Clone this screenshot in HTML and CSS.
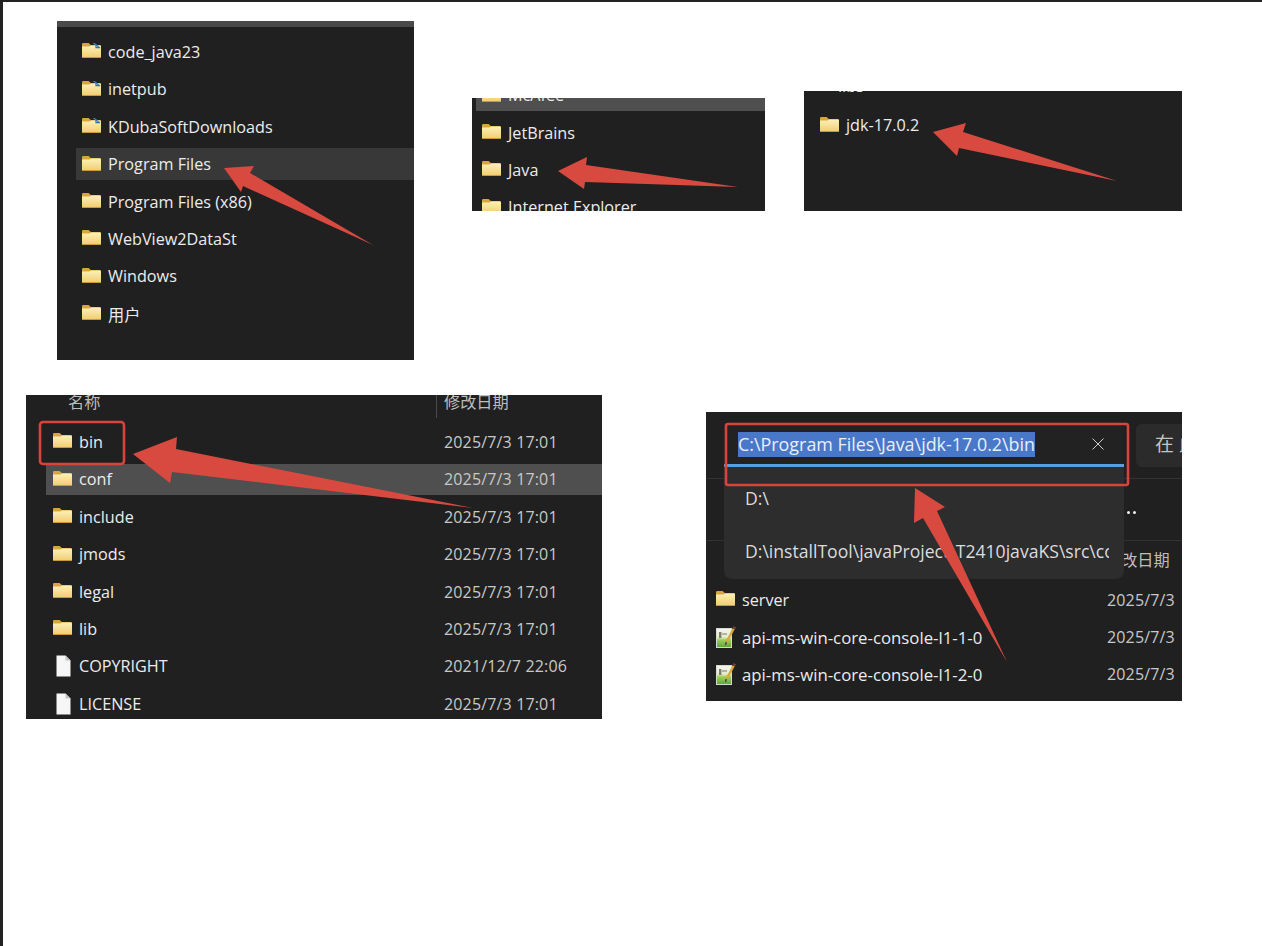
FILE: index.html
```html
<!DOCTYPE html>
<html lang="zh">
<head>
<meta charset="utf-8">
<title>JDK 路径</title>
<link rel="stylesheet" href="styles.css">
</head>
<body>
<svg class="defs" width="0" height="0" aria-hidden="true">
  <defs>
    <linearGradient id="fg" x1="0" y1="0" x2="0" y2="1"><stop offset="0" stop-color="#fdf0b8"/><stop offset="1" stop-color="#f0cc70"/></linearGradient>
    <linearGradient id="ng" x1="0" y1="0" x2="0" y2="1"><stop offset="0" stop-color="#f4f4ec"/><stop offset=".45" stop-color="#e6eccb"/><stop offset=".6" stop-color="#9fd05a"/><stop offset="1" stop-color="#5fa83a"/></linearGradient>
    <symbol id="folder" viewBox="0 0 19 15">
      <path d="M0 1.2Q0 0 1.2 0H6.6L8.8 2H17.8Q19 2 19 3.2V6H0Z" fill="#d9a63c"/>
      <path d="M0 3.6H7.4L9.2 2.6H17.8Q19 2.6 19 3.8V13.8Q19 15 17.8 15H1.2Q0 15 0 13.8Z" fill="url(#fg)"/>
      <path d="M0 14H19V13.8Q19 15 17.8 15H1.2Q0 15 0 13.8Z" fill="#c99a3a"/>
    </symbol>
    <symbol id="shortcut" viewBox="0 0 19 15">
      <use href="#folder"/>
      <path d="M11 -0.5L18 5" stroke="#3f86c9" stroke-width="1.3" fill="none"/>
      <path d="M14 1.2V4.6H17.6" stroke="#2f6fb0" stroke-width="1.2" fill="none"/>
    </symbol>
    <symbol id="doc" viewBox="0 0 15 22">
      <path d="M0.5 0.5H9.5L14.5 5.5V21.5H0.5Z" fill="#f6f6f6"/>
      <path d="M9.5 0.5V5.5H14.5Z" fill="#c4c4c4"/>
    </symbol>
    <symbol id="note" viewBox="0 0 20 22">
      <rect x="0" y="2" width="16" height="20" fill="#d8d8d0"/>
      <rect x="1" y="3" width="14" height="18" fill="url(#ng)"/>
      <rect x="3" y="6" width="2.4" height="6" fill="#7c7c72"/>
      <path d="M6 8H11" stroke="#8a8a80" stroke-width="1.2"/>
      <path d="M18.6 1L10 17" stroke="#d8a93a" stroke-width="2.4"/>
      <path d="M18.6 1L17.6 3" stroke="#6b3b2a" stroke-width="2.6"/>
      <path d="M10.4 16L9.4 19" stroke="#444" stroke-width="1.4"/>
    </symbol>
  </defs>
</svg>

<main class="canvas">
  <section class="shot shot-a">
    <div class="strip"></div>
    <div class="list list-a">
      <div class="row"><svg class="fi"><use href="#shortcut"/></svg><span>code_java23</span></div>
      <div class="row"><svg class="fi"><use href="#shortcut"/></svg><span>inetpub</span></div>
      <div class="row"><svg class="fi"><use href="#shortcut"/></svg><span>KDubaSoftDownloads</span></div>
      <div class="row sel-soft"><svg class="fi"><use href="#folder"/></svg><span>Program Files</span></div>
      <div class="row"><svg class="fi"><use href="#folder"/></svg><span>Program Files (x86)</span></div>
      <div class="row"><svg class="fi"><use href="#folder"/></svg><span>WebView2DataSt</span></div>
      <div class="row"><svg class="fi"><use href="#folder"/></svg><span>Windows</span></div>
      <div class="row"><svg class="fi"><use href="#folder"/></svg><span>用户</span></div>
    </div>
  </section>

  <section class="shot shot-b">
    <div class="list list-b">
      <div class="row sel"><svg class="fi"><use href="#folder"/></svg><span>McAfee</span></div>
      <div class="row"><svg class="fi"><use href="#folder"/></svg><span>JetBrains</span></div>
      <div class="row"><svg class="fi"><use href="#folder"/></svg><span>Java</span></div>
      <div class="row"><svg class="fi"><use href="#folder"/></svg><span>Internet Explorer</span></div>
    </div>
  </section>

  <section class="shot shot-c">
    <div class="list list-c">
      <div class="row"><span class="remnant">libs</span></div>
      <div class="row"><svg class="fi"><use href="#folder"/></svg><span>jdk-17.0.2</span></div>
    </div>
  </section>

  <section class="shot shot-d">
    <header class="head-d">
      <span class="h-name">名称</span>
      <span class="h-date">修改日期</span>
    </header>
    <div class="list list-d">
      <div class="row"><svg class="fi"><use href="#folder"/></svg><span class="name">bin</span><span class="date">2025/7/3 17:01</span></div>
      <div class="row sel"><svg class="fi"><use href="#folder"/></svg><span class="name">conf</span><span class="date">2025/7/3 17:01</span></div>
      <div class="row"><svg class="fi"><use href="#folder"/></svg><span class="name">include</span><span class="date">2025/7/3 17:01</span></div>
      <div class="row"><svg class="fi"><use href="#folder"/></svg><span class="name">jmods</span><span class="date">2025/7/3 17:01</span></div>
      <div class="row"><svg class="fi"><use href="#folder"/></svg><span class="name">legal</span><span class="date">2025/7/3 17:01</span></div>
      <div class="row"><svg class="fi"><use href="#folder"/></svg><span class="name">lib</span><span class="date">2025/7/3 17:01</span></div>
      <div class="row"><svg class="fi fi-doc"><use href="#doc"/></svg><span class="name">COPYRIGHT</span><span class="date">2021/12/7 22:06</span></div>
      <div class="row"><svg class="fi fi-doc"><use href="#doc"/></svg><span class="name">LICENSE</span><span class="date">2025/7/3 17:01</span></div>
    </div>
  </section>

  <section class="shot shot-e">
    <div class="bar-top">
      <div class="search">在 此电脑</div>
    </div>
    <div class="bar-mid"><span class="dots"><i></i><i></i><i></i></span></div>
    <div class="head-e"><span>修改日期</span></div>
    <div class="list list-e">
      <div class="row"><svg class="fi"><use href="#folder"/></svg><span class="name">server</span><span class="date">2025/7/3 17:01</span></div>
      <div class="row"><svg class="fi fi-note"><use href="#note"/></svg><span class="name">api-ms-win-core-console-l1-1-0</span><span class="date">2025/7/3 17:01</span></div>
      <div class="row"><svg class="fi fi-note"><use href="#note"/></svg><span class="name">api-ms-win-core-console-l1-2-0</span><span class="date">2025/7/3 17:01</span></div>
      <div class="row"><svg class="fi fi-note"><use href="#note"/></svg><span class="name">api-ms-win-core-console-l1-3-0</span><span class="date">2025/7/3 17:01</span></div>
    </div>
    <div class="dropdown">
      <div class="addr">
        <span class="addr-text">C:\Program Files\Java\jdk-17.0.2\bin</span>
        <svg class="close" viewBox="0 0 12 12"><path d="M0.5 0.5L11.5 11.5M11.5 0.5L0.5 11.5"/></svg>
      </div>
      <div class="suggest s1">D:\</div>
      <div class="suggest s2">D:\installTool\javaProject\T2410javaKS\src\com\example</div>
    </div>
  </section>

  <svg class="overlay" viewBox="3 2 1259 944" aria-hidden="true">
    <polygon class="arrow" points="224,168 254,166 250,173 373,245 243,186 241,192"/>
    <polygon class="arrow" points="558,171 587,157 586,165 738,187 585,182 584,189"/>
    <polygon class="arrow" points="933,132 966,123 963,132 1117,181 959,148 957,156"/>
    <polygon class="arrow" points="133,454 177,437 176,449 473,508 172,472 170,483"/>
    <polygon class="arrow" points="915,488 945,507 937,511 1007,662 923,518 914,523"/>
    <rect class="mark" x="40" y="422" width="84" height="42" rx="3"/>
    <rect class="mark" x="726" y="424" width="402" height="61" rx="2"/>
  </svg>
</main>
</body>
</html>
```
FILE: styles.css
```css
* { box-sizing: border-box; }
html, body { margin: 0; padding: 0; background: #fff; }
.defs { position: absolute; }
.canvas {
  position: relative;
  width: 1262px;
  height: 946px;
  background: #fff;
  border-top: 2px solid #222;
  border-left: 3px solid #222;
  overflow: hidden;
  font-family: "Open Sans", "Noto Sans CJK SC", sans-serif;
  font-size: 16.2px;
  color: #ececec;
}
.shot { position: absolute; background: #202020; overflow: hidden; }
.shot-a { left: 54px; top: 19px; width: 357px; height: 339px; }
.shot-b { left: 469px; top: 96px; width: 293px; height: 113px; }
.shot-c { left: 801px; top: 89px; width: 378px; height: 120px; }
.shot-d { left: 23px; top: 393px; width: 576px; height: 324px; }
.shot-e { left: 703px; top: 410px; width: 476px; height: 289px; }

.strip { height: 6px; background: #4a4a4a; }
.list { display: flex; flex-direction: column; gap: 6px; }
.row { display: flex; align-items: center; height: 31.4px; flex: none; white-space: nowrap; }
.fi { width: 19px; height: 15px; flex: none; margin-right: 7px; position: relative; top: -1px; }
.fi-doc { width: 15px; height: 22px; margin: 0 9px 0 2px; top: 0; }
.fi-note { width: 20px; height: 22px; margin-right: 6px; top: 0; }

.list-a { margin: 9.3px 0 0 19px; }
.list-a .row { padding-left: 6px; }
.sel-soft { background: #383838; }
.sel { background: #4f4f4f; }

.list-b { margin: -18.5px 0 0 4px; }
.list-b .row { padding-left: 6px; }
.list-b .fi { margin-right: 7px; }

.list-c { margin: -19px 0 0 16px; }
.remnant { margin: -4px 0 0 18px; }

.head-d { position: relative; height: 31.3px; color: #bdbdbd; }
.h-name { position: absolute; left: 42px; top: -6px; }
.h-date { position: absolute; left: 418px; top: -6px; }
.head-d::after { content: ""; position: absolute; left: 410px; top: 0; width: 1px; height: 23px; background: #4a4a4a; }
.list-d { margin-left: 20px; }
.list-d .row { padding-left: 7px; }
.name { flex: 1; }
.date { color: #c8c8c8; width: 158px; flex: none; font-size: 16px; letter-spacing: 0.15px; }
.list-d .fi-doc { margin-left: 3px; margin-right: 8px; }

.bar-top { height: 67px; border-bottom: 1px solid #333; padding: 12px 0 0 430px; }
.search {
  width: 60px;
  height: 43px;
  background: #2b2b2b;
  border-radius: 6px 0 0 6px;
  padding-left: 19px;
  font-size: 19px;
  line-height: 40px;
  color: #c4c4c4;
  white-space: nowrap;
  overflow: hidden;
}
.bar-mid { height: 62px; border-bottom: 1px solid #333; display: flex; justify-content: flex-end; align-items: center; padding: 6px 46px 0 0; }
.dots { display: flex; gap: 3px; }
.dots i { width: 3px; height: 3px; border-radius: 50%; background: #f0f0f0; }
.head-e { height: 43px; padding: 6px 0 0 399px; color: #bdbdbd; }
.list-e { margin-left: 10px; }
.list-e .name { width: 365px; flex: none; font-size: 16.8px; }
.list-e .row:first-child .name { font-size: 16.2px; }
.list-e .date { word-spacing: 3px; }

.dropdown {
  position: absolute;
  left: 18px;
  top: 12px;
  width: 400px;
  height: 155px;
  background: #2d2d2d;
  border-radius: 8px;
  overflow: hidden;
}
.addr {
  display: flex;
  align-items: center;
  justify-content: space-between;
  height: 43px;
  padding: 0 20px 0 14px;
  background: #222;
  border-bottom: 3px solid #5a9fdc;
}
.addr-text {
  background: #4a78c9;
  color: #e9eef8;
  font-size: 17.9px;
  line-height: 25px;
  white-space: nowrap;
  margin-top: 1px;
}
.close { width: 12px; height: 12px; }
.close path { stroke: #cfcfcf; stroke-width: 1; fill: none; }
.suggest { margin-left: 21px; width: 364px; overflow: hidden; white-space: nowrap; color: #dcdcdc; font-size: 17.6px; line-height: 22px; }
.s1 { margin-top: 20px; }
.s2 { margin-top: 31px; }

.overlay { position: absolute; left: 0; top: 0; width: 1259px; height: 944px; pointer-events: none; }
.arrow { fill: #d84a40; }
.mark { fill: none; stroke: #d8433b; stroke-width: 2.6; }
```
